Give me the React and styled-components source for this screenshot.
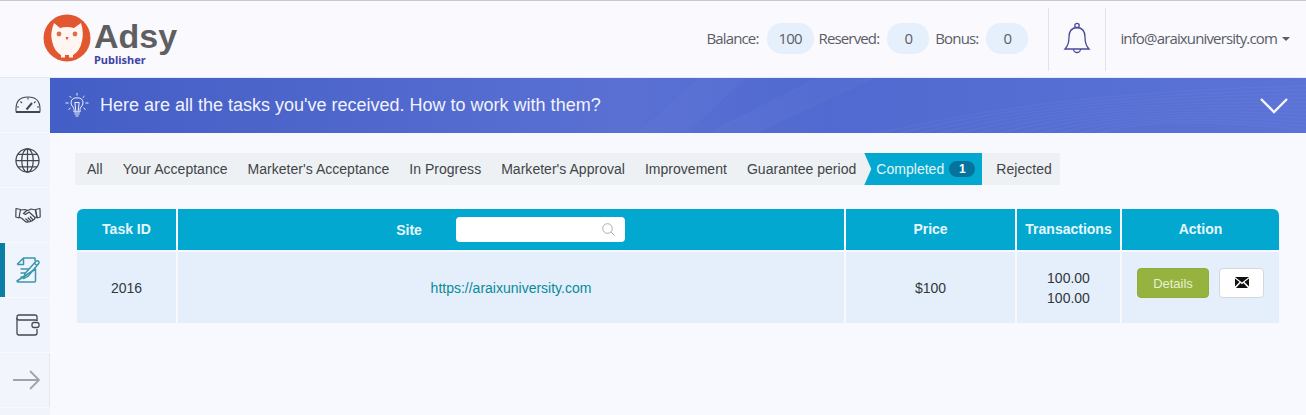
import React from 'react'
import styled, { createGlobalStyle } from 'styled-components'

const TABS = ['All', 'Your Acceptance', "Marketer's Acceptance", 'In Progress', "Marketer's Approval", 'Improvement', 'Guarantee period']
const COLUMNS = '99px 666px 169px 103px 157px'
const STRIPES = [0, 1, 2, 3, 4, 5, 6, 7, 8, 9, 10, 11]

const Global = createGlobalStyle`
  html, body { margin: 0; padding: 0; background: #f8f9fe; }
  body { font-family: "Liberation Sans", Arial, sans-serif; overflow: hidden; }
`

const Page = styled.div`
  width: 1306px;
  height: 415px;
  display: flex;
  flex-direction: column;
  overflow: hidden;
`

const Header = styled.header`
  height: 78px;
  box-sizing: border-box;
  border-top: 1px solid #c6c8d2;
  border-bottom: 1px solid #e6e9f2;
  background: #f9f9fe;
  display: flex;
  align-items: center;
  padding-left: 43px;
  flex: none;
`

const Logo = styled.div`
  display: flex;
  align-items: flex-start;
  height: 48px;
  margin-top: -2px;
`

const LogoText = styled.div`
  margin-left: 3px;
  padding-top: 4px;
  display: flex;
  flex-direction: column;
`

const Brand = styled.span`
  font-size: 34px;
  line-height: 36px;
  font-weight: 700;
  color: #5f5f61;
`

const Role = styled.span`
  font-family: "Noto Sans", sans-serif;
  font-size: 11px;
  line-height: 11px;
  font-weight: 700;
  color: #4143a6;
`

const Account = styled.div`
  margin-left: auto;
  height: 63px;
  display: flex;
  align-items: center;
  font-family: "Open Sans", sans-serif;
  font-size: 15px;
  color: #5b5e66;
  letter-spacing: -0.85px;
`

const Stats = styled.div`
  display: flex;
  align-items: center;
  margin-bottom: 2px;
`

const Label = styled.span`
  margin-right: 8px;
`

const Pill = styled.span`
  width: ${p => p.$w}px;
  height: 31px;
  border-radius: 15px;
  background: #e5f0fc;
  display: flex;
  align-items: center;
  justify-content: center;
  margin-right: ${p => p.$mr}px;
`

const BellBox = styled.div`
  width: 58px;
  height: 63px;
  box-sizing: border-box;
  border-left: 1px solid #e1e3ea;
  border-right: 1px solid #e1e3ea;
  margin-left: 20px;
  display: flex;
  align-items: center;
  justify-content: center;
`

const Email = styled.div`
  display: flex;
  align-items: center;
  margin-bottom: 2px;
  padding: 0 16px 0 14px;
`

const Caret = styled.i`
  width: 0;
  height: 0;
  border: 4px solid transparent;
  border-top-color: #5b5e66;
  border-bottom: 0;
  margin-left: 5px;
  margin-top: 2px;
`

const Body = styled.div`
  display: flex;
  flex: 1;
  min-height: 0;
`

const Side = styled.nav`
  width: 50px;
  flex: none;
  background: #f0f4fd;
  display: flex;
  flex-direction: column;
`

const SideItem = styled.div`
  position: relative;
  height: 55px;
  flex: none;
  box-sizing: border-box;
  border-bottom: 1px solid #f9fafe;
  display: flex;
  align-items: center;
  justify-content: center;
  padding-left: 5px;
  color: ${p => (p.$active ? '#3a96ab' : '#45474f')};
  ${p => p.$muted && 'color: #a0a2ac; padding-left: 3px; border-right: 1px solid #e4e7f0; background: #f3f5fc;'}
  ${p => p.$active && `
    &::before {
      content: "";
      position: absolute;
      left: 0;
      top: 0;
      bottom: 0;
      width: 5px;
      background: #0a7ea4;
    }
  `}
`

const Main = styled.main`
  flex: 1;
  min-width: 0;
`

const Banner = styled.div`
  position: relative;
  height: 55px;
  display: flex;
  align-items: center;
  padding: 0 17px 0 15px;
  overflow: hidden;
  color: #fff;
  background: linear-gradient(90deg, #435ec6 0%, #5a70d3 46%, #506ad1 62%, #5b73d6 100%);
`

const Waves = styled.svg`
  position: absolute;
  left: 0;
  top: 0;
`

const BannerText = styled.span`
  position: relative;
  font-size: 18px;
  margin-left: 11px;
  color: #f1f3fc;
`

const Chevron = styled.svg`
  position: relative;
  margin-left: auto;
`

const Content = styled.div`
  padding: 20px 0 0 25px;
`

const Tabs = styled.div`
  display: inline-flex;
  height: 32px;
  background: #eef1f3;
  align-items: center;
  font-size: 14px;
  letter-spacing: 0.025px;
  color: #3f4449;
`

const Tab = styled.span`
  padding: 0 ${p => p.$r ?? 10}px 0 ${p => p.$l ?? 10}px;
  white-space: nowrap;
`

const ActiveTab = styled.span`
  height: 32px;
  width: 118px;
  box-sizing: border-box;
  padding-left: 12px;
  margin-left: -2px;
  background: #03a8d0;
  color: #e3f6fb;
  display: flex;
  align-items: center;
  clip-path: polygon(0 0, 100% 0, 100% 100%, 0 100%, 7px 50%);
`

const Count = styled.b`
  width: 26px;
  height: 16px;
  margin-left: 5px;
  border-radius: 8px;
  background: #05739c;
  color: #fff;
  font-size: 12px;
  line-height: 16px;
  text-align: center;
`

const Grid = styled.div`
  display: grid;
  grid-template-columns: ${COLUMNS};
  grid-template-rows: 41px 71px;
  gap: 2px;
  margin: 24px 0 0 2px;
  width: 1202px;
`

const Head = styled.div`
  background: #03a8d0;
  color: #e6f8fc;
  font-size: 14px;
  font-weight: 700;
  display: flex;
  align-items: center;
  justify-content: center;
  padding-bottom: 2px;
  box-sizing: border-box;
  position: relative;
  ${p => p.$first && 'border-top-left-radius: 6px;'}
  ${p => p.$last && 'border-top-right-radius: 6px;'}
`

const SearchBox = styled.div`
  position: absolute;
  left: 278px;
  top: 8px;
  width: 169px;
  height: 25px;
  box-sizing: border-box;
  background: #fff;
  border-radius: 4px;
  display: flex;
  align-items: center;
  justify-content: flex-end;
  padding-right: 10px;
  color: #a9adb4;
`

const SiteTitle = styled.span`
  margin: 2px 204px 0 0;
`

const Cell = styled.div`
  background: #e4effb;
  color: #33373c;
  font-size: 14px;
  line-height: 20px;
  display: flex;
  flex-direction: column;
  align-items: center;
  justify-content: center;
`

const SiteLink = styled.a`
  color: #0b8a96;
  text-decoration: none;
`

const Actions = styled(Cell)`
  flex-direction: row;
  justify-content: flex-start;
  padding: 0 0 9px 15px;
  gap: 10px;
`

const Details = styled.button`
  width: 72px;
  height: 30px;
  border: 1px solid #8fac3c;
  border-radius: 4px;
  background: #96b33f;
  color: #e8f0cf;
  font: 13px "Liberation Sans", Arial, sans-serif;
  padding: 0;
`

const Mail = styled.button`
  width: 45px;
  height: 30px;
  box-sizing: border-box;
  border: 1px solid #d3d8e0;
  border-radius: 4px;
  background: #fff;
  padding: 0 0 2px;
  display: flex;
  align-items: center;
  justify-content: center;
`

const OwlLogo = () => (
  <svg width="48" height="48" viewBox="0 0 48 48">
    <circle cx="24" cy="24" r="23.5" fill="#e2572f" />
    <path d="M11 9 L17 14 Q24 12 31 14 L38 9 Q41 19 39 27 Q37 37 30 41 L18 41 Q11 37 9 27 Q7 19 11 9 Z" fill="#fff6f1" />
    <path d="M18 41 h4 v2.5 h-4 z M26 41 h4 v2.5 h-4 z" fill="#fff6f1" />
    <circle cx="16" cy="20" r="2.4" fill="#dd6d4c" />
    <circle cx="32" cy="20" r="2.4" fill="#dd6d4c" />
    <path d="M22.5 23 h3 l-1.5 3.5 z" fill="#e2572f" />
  </svg>
)

const Bell = () => (
  <svg width="28" height="34" viewBox="0 0 28 34" fill="none" stroke="#4a4a9a" strokeWidth="1.3">
    <circle cx="14" cy="3.5" r="2.2" />
    <path d="M2 27 Q6 23 6 15 Q6 6 14 5.5 Q22 6 22 15 Q22 23 26 27 Z" />
    <path d="M10.5 27 a3.5 3.5 0 0 0 7 0" />
  </svg>
)

const Gauge = () => (
  <svg width="26" height="18" viewBox="0 0 26 18" fill="none" stroke="currentColor" strokeWidth="1.1">
    <path d="M1 15.5 V13 Q1 1 13 1 Q25 1 25 13 V15.5" />
    <path d="M0.8 16 H25.2" strokeWidth="2" />
    <path d="M11.5 13.5 L17 7" strokeWidth="2" />
    <path d="M5.5 5.5 l1.5 1.5 M13 1.5 v2 M20.5 5.5 l-1.5 1.5 M2 11 h2 M22 11 h2" />
  </svg>
)

const Globe = () => (
  <svg width="25" height="25" viewBox="0 0 26 26" fill="none" stroke="currentColor" strokeWidth="1.3">
    <circle cx="13" cy="13" r="12" />
    <ellipse cx="13" cy="13" rx="6" ry="12" />
    <path d="M13 1 V25 M1 13 H25 M3 6.5 H23 M3 19.5 H23" />
  </svg>
)

const Handshake = () => (
  <svg width="26" height="16" viewBox="0 0 26 16" fill="none" stroke="currentColor" strokeWidth="1.2" strokeLinejoin="round">
    <path d="M1 1.5 L5.5 2.5 L4 11 L0.8 10 Z M25 1.5 L20.5 2.5 L22 11 L25.2 10 Z" />
    <path d="M5.5 3 L10 2.5 L13 3.5 L16 2 L20.5 3 L22 10 L20 10.5 L14 5 L10.5 7.5 L8.5 6.5 L12 3.2" />
    <path d="M4.3 10 L7 11.5 L11 15 Q12.5 15.6 13.5 14.5 Q15 15.4 16 14 Q17.5 14.3 18 12.8 Q19.8 12.8 20 10.5" />
    <path d="M13.5 14.5 L10.5 11.5 M16 14 L12.8 10.5 M18 12.8 L15 9.5" />
  </svg>
)

const Edit = () => (
  <svg width="24" height="26" viewBox="0 0 24 26" fill="none" stroke="currentColor" strokeWidth="1.5" strokeLinejoin="round">
    <path d="M1 7.5 L7.5 1 H19 V4 M19.5 12 V24 Q19.5 25 18.5 25 H2 Q1 25 1 24 Z M7.5 1 V7.5 H1" />
    <path d="M4.5 12 H13 M4.5 16 H9.5 M4.5 20 H7.5" />
    <path d="M7.5 21.5 L9 16.5 L20 4.2 Q21.3 3.2 22.5 4.2 Q23.5 5.5 22.5 6.8 L11.8 19.4 Z M18.3 6.2 L21.3 8.8" />
  </svg>
)

const Wallet = () => (
  <svg width="24" height="22" viewBox="0 0 24 22" fill="none" stroke="currentColor" strokeWidth="1.3">
    <path d="M21 7 V3 Q21 1 19 1 H3 Q1 1 1 3 V19 Q1 21 3 21 H19 Q21 21 21 19 V15" />
    <path d="M1 4 Q1 6 3 6 H19 Q21 6 21 7" />
    <rect x="16" y="8.5" width="7" height="5" rx="2" />
  </svg>
)

const Arrow = () => (
  <svg width="27" height="20" viewBox="0 0 27 20" fill="none" stroke="currentColor" strokeWidth="1.8">
    <path d="M0 10 H26 M17 1 L26 10 L17 19" />
  </svg>
)

const Bulb = () => (
  <svg width="24" height="25" viewBox="0 0 24 25" fill="none" stroke="#f1f3fc" strokeWidth="1">
    <path d="M9 19 V16.5 Q9 15 8 14 Q6 12 6 10 Q6 4.8 12 4.8 Q18 4.8 18 10 Q18 12 16 14 Q15 15 15 16.5 V19 Z" />
    <path d="M9.8 9.5 H14.2 L13 19 M11 19 L9.8 9.5 M9.5 21 H14.5 M10.5 23 H13.5" />
    <path d="M12 0 V2.5 M4.5 3 L6.3 4.8 M19.5 3 L17.7 4.8 M0.5 10 H3.5 M20.5 10 H23.5 M3.5 16.5 L5.5 15 M20.5 16.5 L18.5 15" />
  </svg>
)

const Search = () => (
  <svg width="13" height="13" viewBox="0 0 13 13" fill="none" stroke="currentColor" strokeWidth="1">
    <circle cx="5.5" cy="5.5" r="4.8" />
    <path d="M9 9 L12.5 12.5" />
  </svg>
)

const Envelope = () => (
  <svg width="14" height="11" viewBox="0 0 14 11">
    <path d="M0 0 H14 L7 5.5 Z M0 1.5 L4.5 5 L0 9.5 Z M14 1.5 L9.5 5 L14 9.5 Z M1 11 L5.5 6 L7 7.2 L8.5 6 L13 11 Z" fill="#111" />
  </svg>
)

const App = () => (
  <Page>
    <Global />
    <Header>
      <Logo>
        <OwlLogo />
        <LogoText>
          <Brand>Adsy</Brand>
          <Role>Publisher</Role>
        </LogoText>
      </Logo>
      <Account>
        <Stats>
          <Label>Balance:</Label>
          <Pill $w={47} $mr={5}>100</Pill>
          <Label>Reserved:</Label>
          <Pill $w={42} $mr={6}>0</Pill>
          <Label>Bonus:</Label>
          <Pill $w={42} $mr={0}>0</Pill>
        </Stats>
        <BellBox><Bell /></BellBox>
        <Email>info@araixuniversity.com<Caret /></Email>
      </Account>
    </Header>
    <Body>
      <Side>
        <SideItem><Gauge /></SideItem>
        <SideItem><Globe /></SideItem>
        <SideItem><Handshake /></SideItem>
        <SideItem $active><Edit /></SideItem>
        <SideItem><Wallet /></SideItem>
        <SideItem $muted><Arrow /></SideItem>
      </Side>
      <Main>
        <Banner>
          <Waves width="1256" height="55" viewBox="0 0 1256 55" fill="none" stroke="#fff" strokeOpacity="0.035" strokeWidth="1.5">
            {STRIPES.map(i => <path key={i} d={`M${768 + i * 5} 0 L${660 + i * 4} 55`} />)}
            {STRIPES.map(i => <path key={i} d={`M${650 + i * 4} 0 L${590 + i * 4} 55`} />)}
            {STRIPES.map(i => <path key={i} d={`M${830 + i * 20} 55 Q${1000 + i * 10} ${14 + i * 2} 1256 ${8 + i * 4}`} />)}
          </Waves>
          <Bulb />
          <BannerText>Here are all the tasks you've received. How to work with them?</BannerText>
          <Chevron width="30" height="18" viewBox="0 0 30 18" fill="none" stroke="#f4f6fd" strokeWidth="2.4">
            <path d="M2 2 L15 15 L28 2" />
          </Chevron>
        </Banner>
        <Content>
          <Tabs>
            {TABS.map((t, i) => <Tab key={t} $l={i === 0 ? 12 : 10}>{t}</Tab>)}
            <ActiveTab>Completed<Count>1</Count></ActiveTab>
            <Tab $l={14} $r={8}>Rejected</Tab>
          </Tabs>
          <Grid>
            <Head $first>Task ID</Head>
            <Head>
              <SiteTitle>Site</SiteTitle>
              <SearchBox><Search /></SearchBox>
            </Head>
            <Head>Price</Head>
            <Head>Transactions</Head>
            <Head $last>Action</Head>
            <Cell>2016</Cell>
            <Cell><SiteLink href="#">https://araixuniversity.com</SiteLink></Cell>
            <Cell>$100</Cell>
            <Cell><span>100.00</span><span>100.00</span></Cell>
            <Actions>
              <Details>Details</Details>
              <Mail><Envelope /></Mail>
            </Actions>
          </Grid>
        </Content>
      </Main>
    </Body>
  </Page>
)

export default App
